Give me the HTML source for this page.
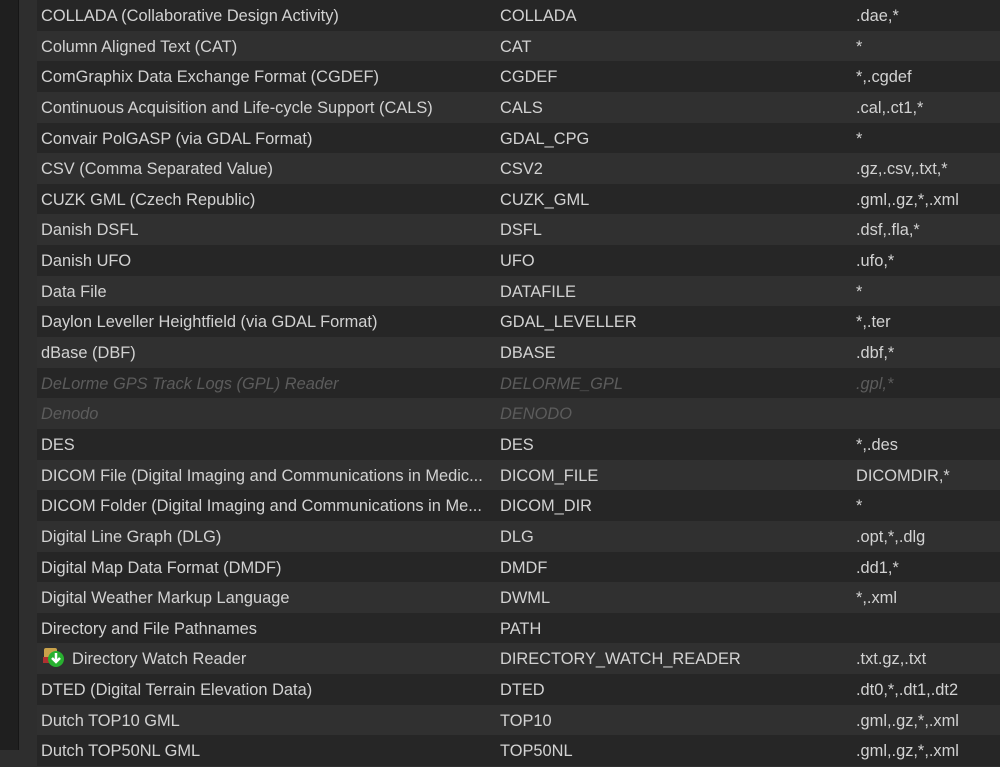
<!DOCTYPE html>
<html><head><meta charset="utf-8"><style>
html,body{margin:0;padding:0;width:1000px;height:750px;overflow:hidden;background:#2e2e2e;font-family:"Liberation Sans",sans-serif;}
#left{position:absolute;left:0;top:0;width:18px;height:750px;background:#1f1f1f;border-right:1px solid #161616;}
#tbl{position:absolute;left:37px;top:0px;width:963px;}
.r{height:30.65px;position:relative;color:#d2d2d2;font-size:16.4px;line-height:32px;white-space:nowrap;}
.r:nth-child(odd){background:#262626;}
.r:nth-child(even){background:#303030;}
.r span{position:absolute;top:0;}
.a{left:4px}.b{left:463px}.c{left:819px}
.d{color:#5c5c5c;font-style:italic;}
</style></head><body>
<div id="left"></div>
<div id="tbl">
<div class="r"><span class="a">COLLADA (Collaborative Design Activity)</span><span class="b">COLLADA</span><span class="c">.dae,*</span></div>
<div class="r"><span class="a">Column Aligned Text (CAT)</span><span class="b">CAT</span><span class="c">*</span></div>
<div class="r"><span class="a">ComGraphix Data Exchange Format (CGDEF)</span><span class="b">CGDEF</span><span class="c">*,.cgdef</span></div>
<div class="r"><span class="a">Continuous Acquisition and Life-cycle Support (CALS)</span><span class="b">CALS</span><span class="c">.cal,.ct1,*</span></div>
<div class="r"><span class="a">Convair PolGASP (via GDAL Format)</span><span class="b">GDAL_CPG</span><span class="c">*</span></div>
<div class="r"><span class="a">CSV (Comma Separated Value)</span><span class="b">CSV2</span><span class="c">.gz,.csv,.txt,*</span></div>
<div class="r"><span class="a">CUZK GML (Czech Republic)</span><span class="b">CUZK_GML</span><span class="c">.gml,.gz,*,.xml</span></div>
<div class="r"><span class="a">Danish DSFL</span><span class="b">DSFL</span><span class="c">.dsf,.fla,*</span></div>
<div class="r"><span class="a">Danish UFO</span><span class="b">UFO</span><span class="c">.ufo,*</span></div>
<div class="r"><span class="a">Data File</span><span class="b">DATAFILE</span><span class="c">*</span></div>
<div class="r"><span class="a">Daylon Leveller Heightfield (via GDAL Format)</span><span class="b">GDAL_LEVELLER</span><span class="c">*,.ter</span></div>
<div class="r"><span class="a">dBase (DBF)</span><span class="b">DBASE</span><span class="c">.dbf,*</span></div>
<div class="r d"><span class="a">DeLorme GPS Track Logs (GPL) Reader</span><span class="b">DELORME_GPL</span><span class="c">.gpl,*</span></div>
<div class="r d"><span class="a">Denodo</span><span class="b">DENODO</span></div>
<div class="r"><span class="a">DES</span><span class="b">DES</span><span class="c">*,.des</span></div>
<div class="r"><span class="a">DICOM File (Digital Imaging and Communications in Medic...</span><span class="b">DICOM_FILE</span><span class="c">DICOMDIR,*</span></div>
<div class="r"><span class="a">DICOM Folder (Digital Imaging and Communications in Me...</span><span class="b">DICOM_DIR</span><span class="c">*</span></div>
<div class="r"><span class="a">Digital Line Graph (DLG)</span><span class="b">DLG</span><span class="c">.opt,*,.dlg</span></div>
<div class="r"><span class="a">Digital Map Data Format (DMDF)</span><span class="b">DMDF</span><span class="c">.dd1,*</span></div>
<div class="r"><span class="a">Digital Weather Markup Language</span><span class="b">DWML</span><span class="c">*,.xml</span></div>
<div class="r"><span class="a">Directory and File Pathnames</span><span class="b">PATH</span></div>
<div class="r"><span class="a" style="left:5px;top:4px;height:22px;width:24px">
<svg width="24" height="22" viewBox="0 0 24 22"><rect x="2" y="1" width="13" height="12" rx="2" fill="#c9a24a"/><rect x="1" y="10" width="6" height="6" fill="#b03030"/><circle cx="14" cy="12" r="8" fill="#28b030"/><path d="M14 6v9M10 11l4 4 4-4" stroke="#fff" stroke-width="2.5" fill="none"/></svg></span><span style="left:35px">Directory Watch Reader</span><span class="b">DIRECTORY_WATCH_READER</span><span class="c">.txt.gz,.txt</span></div>
<div class="r"><span class="a">DTED (Digital Terrain Elevation Data)</span><span class="b">DTED</span><span class="c">.dt0,*,.dt1,.dt2</span></div>
<div class="r"><span class="a">Dutch TOP10 GML</span><span class="b">TOP10</span><span class="c">.gml,.gz,*,.xml</span></div>
<div class="r"><span class="a">Dutch TOP50NL GML</span><span class="b">TOP50NL</span><span class="c">.gml,.gz,*,.xml</span></div>
</div>
</body></html>
